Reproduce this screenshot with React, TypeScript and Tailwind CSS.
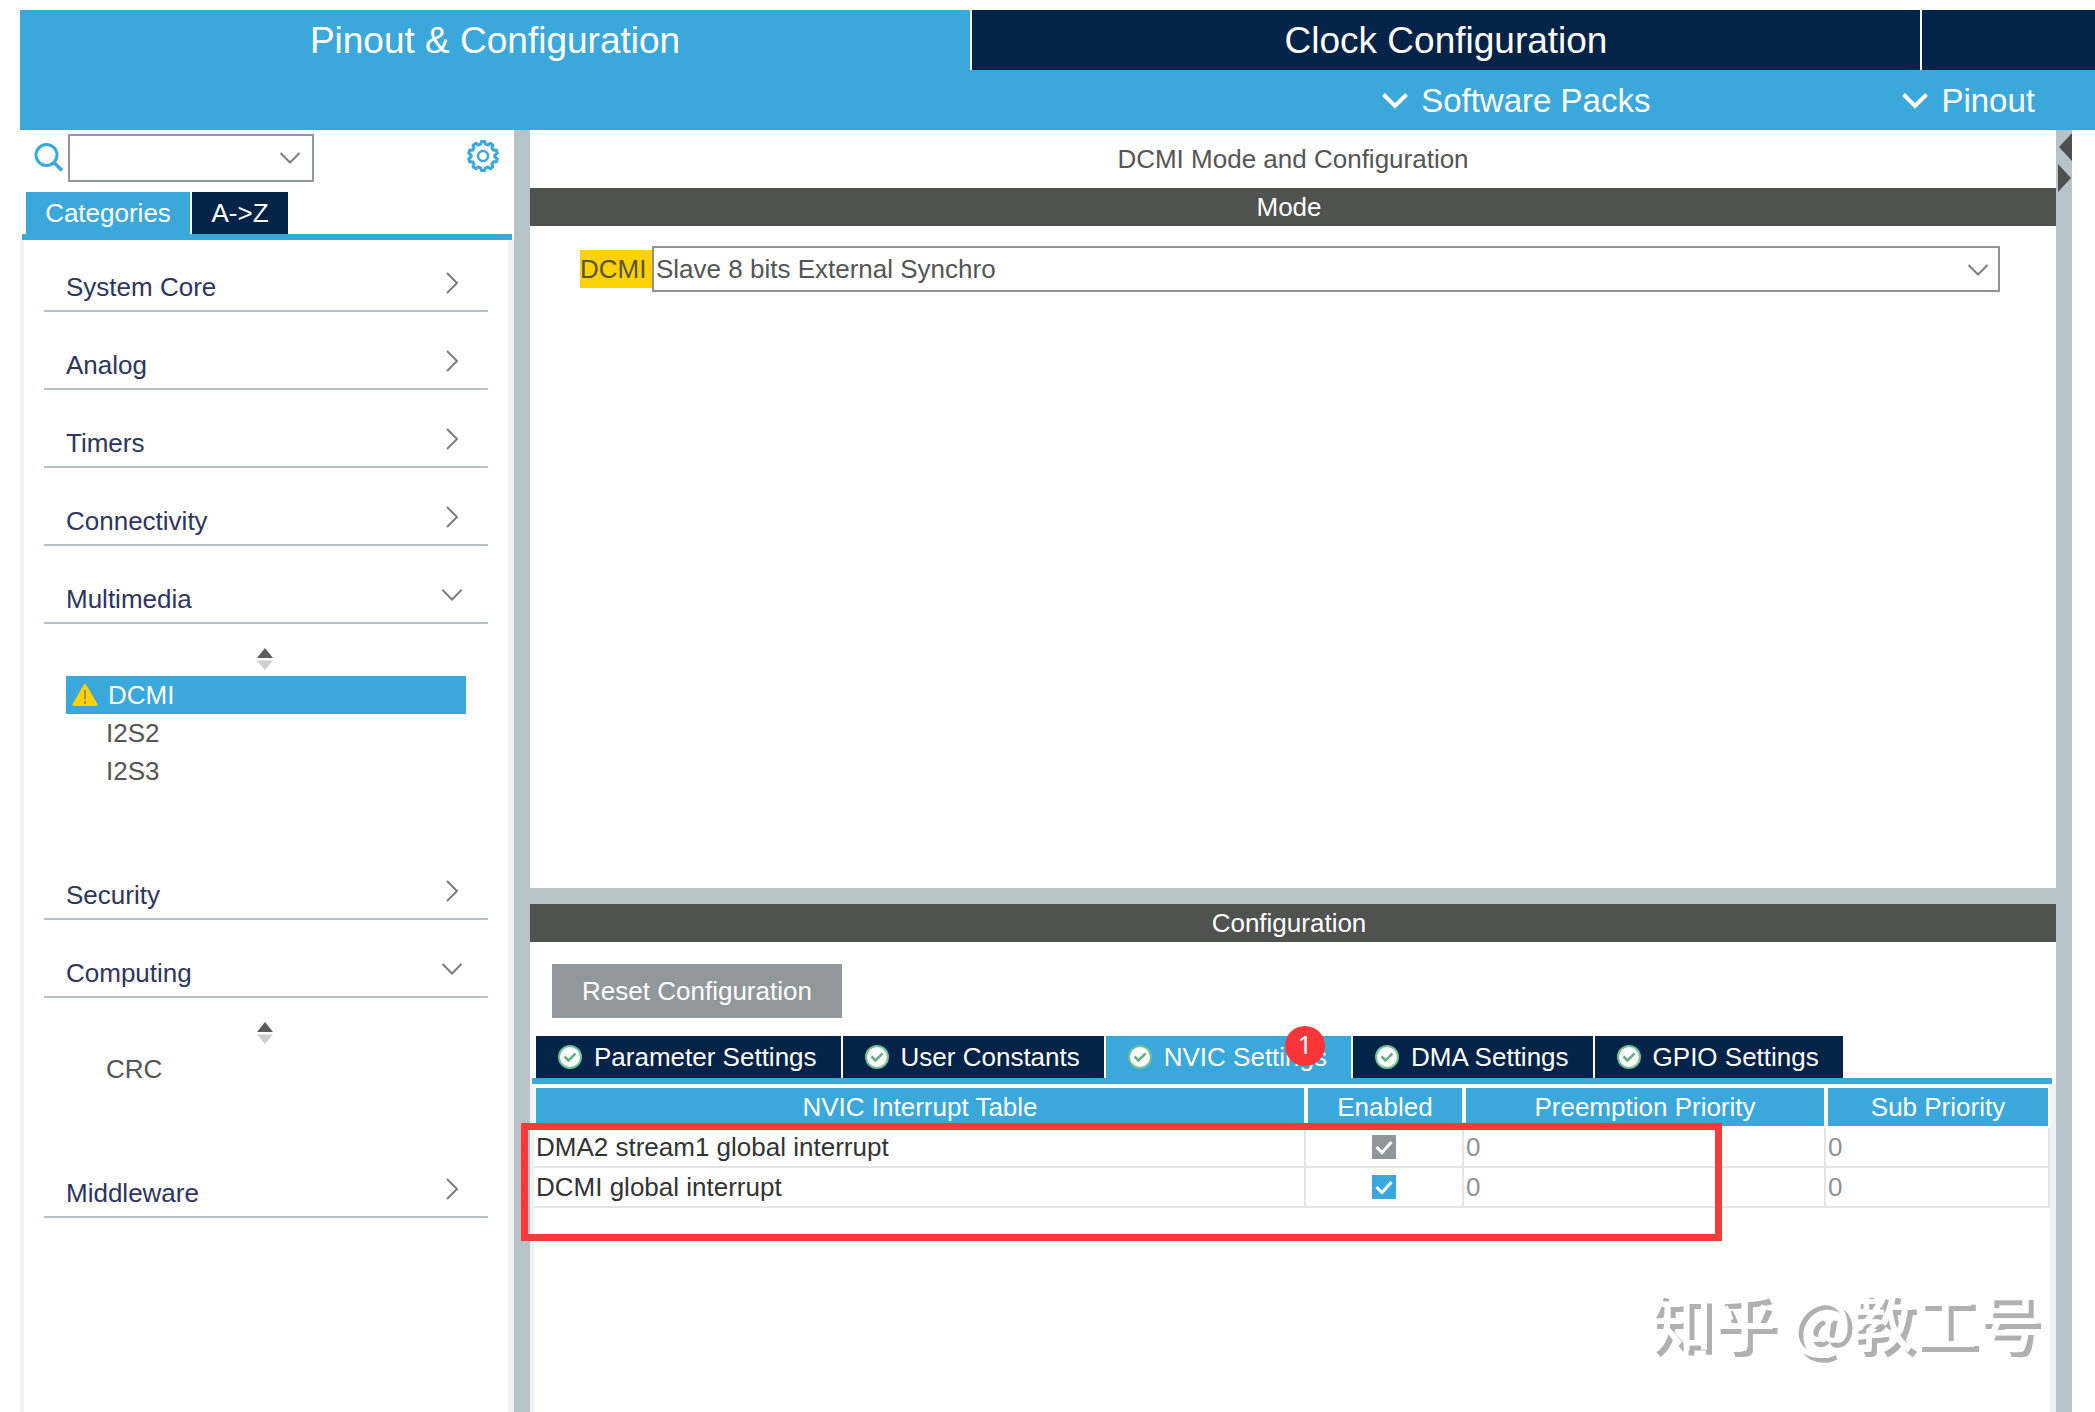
import React from "react";

type Category = {
  name: string;
  items?: string[];
};

const categories: Category[] = [
  { name: "System Core" },
  { name: "Analog" },
  { name: "Timers" },
  { name: "Connectivity" },
  { name: "Multimedia", items: ["DCMI", "I2S2", "I2S3"] },
  { name: "Security" },
  { name: "Computing", items: ["CRC"] },
  { name: "Middleware" },
];

const configTabs = [
  "Parameter Settings",
  "User Constants",
  "NVIC Settings",
  "DMA Settings",
  "GPIO Settings",
];

const interrupts = [
  { name: "DMA2 stream1 global interrupt", locked: true },
  { name: "DCMI global interrupt", locked: false },
];

const ChevronDown = ({ className = "" }: { className?: string }) => (
  <svg
    className={className}
    width={24}
    height={24}
    viewBox="0 0 24 24"
    fill="none"
    stroke="currentColor"
    strokeWidth={2}
  >
    <path d="M2.5 7L12 16.5L21.5 7" />
  </svg>
);

const ChevronRight = ({ className = "" }: { className?: string }) => (
  <svg
    className={className}
    width={24}
    height={24}
    viewBox="0 0 24 24"
    fill="none"
    stroke="currentColor"
    strokeWidth={2}
  >
    <path d="M7 2L17 12L7 22" />
  </svg>
);

const BoldChevron = () => (
  <svg width={28} height={20} viewBox="0 0 28 20" fill="none">
    <path d="M2.5 3.5L14 15L25.5 3.5" stroke="white" strokeWidth={4} />
  </svg>
);

const SearchIcon = () => (
  <svg width={30} height={30} viewBox="0 0 30 30" fill="none">
    <circle cx={12.5} cy={12} r={10.5} stroke="#3aa8da" strokeWidth={3} />
    <path d="M19.5 19L28 27.5" stroke="#3aa8da" strokeWidth={3.5} />
  </svg>
);

const GearIcon = () => (
  <svg
    width={34}
    height={34}
    viewBox="-17 -17 34 34"
    fill="none"
    stroke="#3aa8da"
    strokeWidth={3}
    strokeLinejoin="round"
  >
    <path d="M-2.3 -11.8L-1.6 -14.5H1.6L2.3 -11.8L4.9 -10.9L7.2 -12.7L9.9 -10.7L8.9 -8L10.4 -5.8L13.3 -5.9L14.3 -2.7L11.9 -1.1V1.1L14.3 2.7L13.3 5.9L10.4 5.8L8.9 8L9.9 10.7L7.2 12.7L4.9 10.9L2.3 11.8L1.6 14.5H-1.6L-2.3 11.8L-4.9 10.9L-7.2 12.7L-9.9 10.7L-8.9 8L-10.4 5.8L-13.3 5.9L-14.3 2.7L-11.9 1.1V-1.1L-14.3 -2.7L-13.3 -5.9L-10.4 -5.8L-8.9 -8L-9.9 -10.7L-7.2 -12.7L-4.9 -10.9Z" />
    <circle r={5} strokeWidth={2.5} />
  </svg>
);

const WarningIcon = () => (
  <svg width={26} height={24} viewBox="0 0 26 24">
    <path
      d="M13 2.5L24 21.5H2Z"
      fill="#fcd205"
      stroke="#fcd205"
      strokeWidth={3}
      strokeLinejoin="round"
    />
    <path d="M13 7V16.5M13 18V21" stroke="#a8953a" strokeWidth={2} />
  </svg>
);

const SortArrows = () => (
  <svg width={16} height={22} viewBox="0 0 16 22">
    <path d="M8 0L16 10H0Z" fill="#5c5c5c" />
    <path d="M0 12.5H16L8 22Z" fill="#cfcfcf" />
  </svg>
);

const CheckBadge = () => (
  <svg width={24} height={24} viewBox="0 0 24 24" fill="none">
    <circle cx={12} cy={12} r={11} fill="white" stroke="#6cc493" strokeWidth={2} />
    <path d="M6.5 11.5L10.5 15.5L17.5 8.5" stroke="#5fb384" strokeWidth={2.5} />
  </svg>
);

const Header = () => (
  <header className="ml-5 mt-2.5 bg-[#3aa8da] text-white">
    <nav className="grid h-15 grid-cols-[950fr_950fr_175fr] text-[37px] leading-[58px]">
      <button className="pt-0.5 text-center">Pinout &amp; Configuration</button>
      <button className="border-l-2 border-white bg-[#032348] pt-0.5 text-center">
        Clock Configuration
      </button>
      <button
        aria-label="Project Manager"
        className="border-l-2 border-white bg-[#032348]"
      />
    </nav>
    <div className="flex h-15 items-center justify-end gap-[251px] pr-15 pt-0.5 text-[33px]">
      <button className="flex items-center gap-3">
        <BoldChevron />
        Software Packs
      </button>
      <button className="flex items-center gap-3">
        <BoldChevron />
        Pinout
      </button>
    </div>
  </header>
);

const CategoryRow = ({ name, items }: Category) => (
  <section>
    <button className="flex h-12 w-full items-center justify-between border-b-2 border-[#b7c0c5] pl-[22px] pr-6 text-[#2d3560]">
      {name}
      {items ? (
        <ChevronDown className="mb-2 text-[#7d7d7d]" />
      ) : (
        <ChevronRight className="mb-2 text-[#7d7d7d]" />
      )}
    </button>
    {items && (
      <div className="px-[22px] pb-[52px] pt-6">
        <div className="flex h-7 justify-center pr-0.5">
          <SortArrows />
        </div>
        <ul>
          {items.map((item) => (
            <li key={item}>
              {item === "DCMI" ? (
                <button className="flex h-[38px] w-full items-center gap-2.5 bg-[#3aa8da] pl-1.5 text-white">
                  <WarningIcon />
                  {item}
                </button>
              ) : (
                <button className="flex h-[38px] w-full items-center pl-10 text-[#555]">
                  {item}
                </button>
              )}
            </li>
          ))}
        </ul>
      </div>
    )}
  </section>
);

const Sidebar = () => (
  <aside className="flex w-[494px] shrink-0 flex-col">
    <div className="flex items-center gap-1 pl-3.5 pr-3.5 pt-1">
      <label htmlFor="search" aria-label="Search">
        <SearchIcon />
      </label>
      <div className="relative">
        <select
          id="search"
          className="h-12 w-[246px] appearance-none border-2 border-[#90979b] bg-white"
        />
        <ChevronDown className="pointer-events-none absolute right-3 top-3 text-[#7d7d7d]" />
      </div>
      <button aria-label="Settings" className="mb-1 ml-auto">
        <GearIcon />
      </button>
    </div>
    <div className="mx-0.5 mt-2.5 flex gap-0.5 border-b-6 border-[#3aa8da] pl-1 text-white">
      <button className="h-[42px] w-[164px] bg-[#3aa8da]">Categories</button>
      <button className="h-[42px] w-24 bg-[#032348]">A-&gt;Z</button>
    </div>
    <div className="flex grow flex-col gap-[30px] border-l-4 border-r-6 border-[#f0f1f1] px-5 pt-6">
      {categories.map((category) => (
        <CategoryRow key={category.name} {...category} />
      ))}
    </div>
  </aside>
);

const ModePanel = () => (
  <section className="h-[774px] border-b-16 border-[#b8c3c8] text-[#555]">
    <h1 className="text-center leading-[58px]">DCMI Mode and Configuration</h1>
    <h2 className="bg-[#505250] pr-2 text-center leading-[38px] text-white">Mode</h2>
    <div className="flex items-center py-5 pl-[50px] pr-14">
      <label htmlFor="mode" className="w-18 bg-[#fcd205] leading-[38px] text-[#5b5330]">
        DCMI
      </label>
      <div className="relative grow">
        <select
          id="mode"
          className="h-[46px] w-full appearance-none border-2 border-[#8e9396] bg-white pl-0.5"
        >
          <option>Slave 8 bits External Synchro</option>
        </select>
        <ChevronDown className="pointer-events-none absolute right-2.5 top-3 text-[#7d7d7d]" />
      </div>
    </div>
  </section>
);

const InterruptTable = () => (
  <div className="relative">
    <table className="w-full table-fixed border-separate border-spacing-0 leading-[38px]">
      <colgroup>
        <col />
        <col className="w-[158px]" />
        <col className="w-[362px]" />
        <col className="w-[224px]" />
      </colgroup>
      <thead>
        <tr className="text-white">
          {["NVIC Interrupt Table", "Enabled", "Preemption Priority", "Sub Priority"].map(
            (title) => (
              <th
                key={title}
                className="border-x-2 border-b-2 border-white bg-[#3aa8da] p-0 font-normal"
              >
                {title}
              </th>
            )
          )}
        </tr>
      </thead>
      <tbody>
        {interrupts.map(({ name, locked }) => (
          <tr key={name} className="text-[#8f9296]">
            <td className="border-b-2 border-r-2 border-[#e4e5e6] p-0 pl-0.5 text-[#333]">
              {name}
            </td>
            <td className="border-b-2 border-r-2 border-[#e4e5e6] p-0">
              <label className="relative mx-auto block size-6">
                <input
                  type="checkbox"
                  aria-label={name}
                  defaultChecked
                  disabled={locked}
                  className="block size-6 appearance-none bg-[#3aa8da] disabled:bg-[#8f979c]"
                />
                <svg
                  className="pointer-events-none absolute inset-0"
                  width={24}
                  height={24}
                  viewBox="0 0 24 24"
                  fill="none"
                >
                  <path d="M4.5 12L10 17.5L19.5 7" stroke="white" strokeWidth={3} />
                </svg>
              </label>
            </td>
            <td className="border-b-2 border-r-2 border-[#e4e5e6] p-0 pl-0.5">0</td>
            <td className="border-b-2 border-r-2 border-[#e4e5e6] p-0 pl-0.5">0</td>
          </tr>
        ))}
      </tbody>
    </table>
    <div className="pointer-events-none absolute -left-[13px] top-[35px] h-[118px] w-[1201px] border-7 border-[#f83a3a]" />
  </div>
);

const ConfigPanel = () => (
  <section className="flex grow flex-col">
    <h2 className="bg-[#505250] pr-2 text-center leading-[38px] text-white">
      Configuration
    </h2>
    <button className="ml-[22px] mt-[22px] h-[54px] w-[290px] bg-[#91989c] text-white">
      Reset Configuration
    </button>
    <div className="ml-0.5 mr-1 mt-[18px] flex gap-0.5 border-b-6 border-[#3aa8da] pl-1 text-white">
      {configTabs.map((tab) =>
        tab === "NVIC Settings" ? (
          <button
            key={tab}
            className="relative flex h-[42px] items-center gap-3 bg-[#3aa8da] pl-[22px] pr-6"
          >
            <CheckBadge />
            {tab}
            <span className="absolute -top-2.5 right-[26px] size-10 rounded-full bg-[#fa3538] font-['Noto_Sans'] leading-9">
              1
            </span>
          </button>
        ) : (
          <button
            key={tab}
            className="flex h-[42px] items-center gap-3 bg-[#032348] pl-[22px] pr-6"
          >
            <CheckBadge />
            {tab}
          </button>
        )
      )}
    </div>
    <div className="flex grow flex-col justify-between border-l-4 border-r-6 border-[#f0f1f1] pt-1">
      <InterruptTable />
      <p className="pb-12 pr-2.5 text-right font-['Noto_Sans_CJK_SC',sans-serif] text-[63px] font-medium leading-[90px] text-white [text-shadow:5px_5px_0_#b0b0b0]">
        知乎 @教工号
      </p>
    </div>
  </section>
);

export default function App() {
  return (
    <div className="flex min-h-screen flex-col overflow-hidden bg-white font-['Liberation_Sans',Arial,sans-serif] text-[26px]">
      <Header />
      <div className="ml-5 flex grow">
        <Sidebar />
        <div className="w-4 shrink-0 bg-[#b7c3c9]" />
        <main className="flex min-w-0 grow flex-col">
          <ModePanel />
          <ConfigPanel />
        </main>
        <div className="mr-[23px] w-4 shrink-0 bg-[#b7c3c9] pt-[3px]">
          <svg width={16} height={60} viewBox="0 0 16 60" fill="#4d4f51">
            <path d="M16 0V28L3 14Z" />
            <path d="M2 31V59L15 45Z" />
          </svg>
        </div>
      </div>
    </div>
  );
}
